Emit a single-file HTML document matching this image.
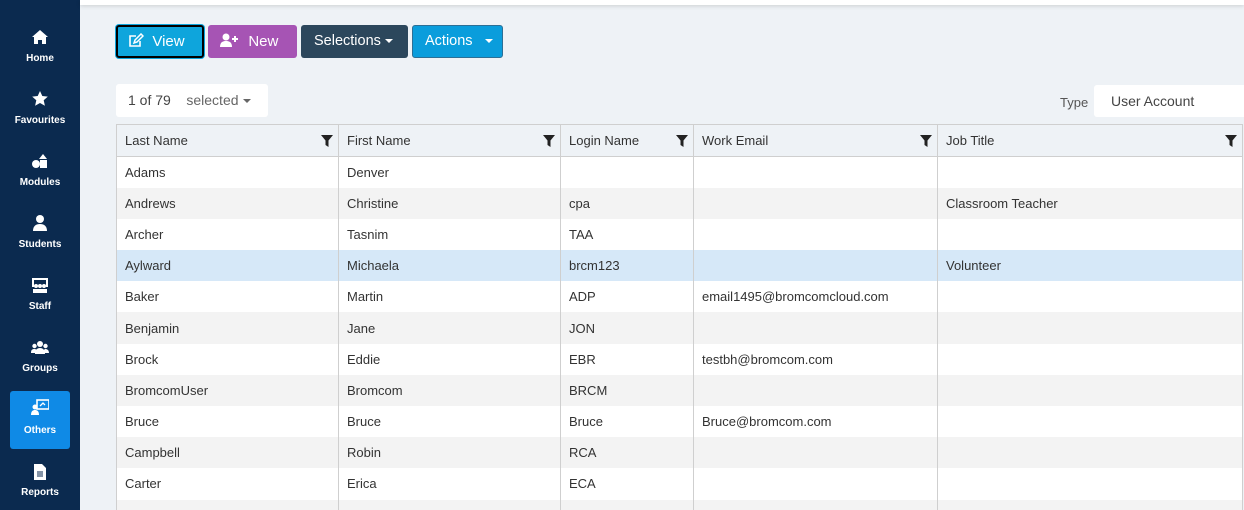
<!DOCTYPE html>
<html style="overflow:hidden;height:510px"><head><meta charset="utf-8"><style>
*{box-sizing:border-box;margin:0;padding:0}
body{width:1244px;height:510px;overflow:hidden;background:#eef2f6;font-family:"Liberation Sans",Arial,sans-serif;position:relative}
.side{position:absolute;left:0;top:0;width:80px;height:510px;background:#0b2a4f}
.nav{position:absolute;left:10px;width:60px;height:58px;color:#fff;font-size:10px;font-weight:bold;text-align:center}
.nav svg{position:absolute;left:21px;top:4px}
.nav span{position:absolute;left:0;right:0;top:28px}
.nav.act{background:#0f8ae6;border-radius:3px}
.top{position:absolute;left:80px;top:0;right:0;height:5px;background:#fff;box-shadow:0 1px 4px rgba(0,0,0,.15)}
.btn{position:absolute;top:25px;height:33px;color:#fff;font-size:15px;border-radius:3px;line-height:33px;white-space:nowrap}
.cnt{position:absolute;left:116px;top:84px;width:152px;height:33px;background:#fff;border-radius:3px;font-size:14px;color:#444;line-height:33px;padding-left:12px}
.caret{display:inline-block;width:0;height:0;border-left:4px solid transparent;border-right:4px solid transparent;border-top:4px solid currentColor;vertical-align:middle;margin-left:4px}
.wrap{position:absolute;left:116px;top:124px;height:386px;overflow:hidden}
table{border-collapse:collapse;font-size:13px;color:#333;table-layout:fixed}
th{height:32px;background:#eef2f6;font-weight:normal;text-align:left;padding-left:8px;border:1px solid #cfcfcf;position:relative;color:#333}
td{height:31.2px;padding-left:8px;border-left:1px solid #cfcfcf;border-right:1px solid #cfcfcf;white-space:nowrap}
tr:nth-child(odd) td{background:#f3f3f3}
tr:nth-child(even) td{background:#fff}
tr.sel td{background:#d6e8f8}
.f{position:absolute;right:5px;top:10px}
</style></head><body>
<div class="side">
 <div class="nav" style="top:25px"><svg width="18" height="16" viewBox="0 0 18 16"><path d="M9 1L1 8h2v7h4v-4h4v4h4V8h2z" fill="#fff"/></svg><span>Home</span></div>
 <div class="nav" style="top:87px"><svg width="18" height="16" viewBox="0 0 18 16"><path d="M9 0l2.3 5 5.5.6-4.1 3.7 1.2 5.4L9 12l-4.9 2.7 1.2-5.4L1.2 5.6 6.7 5z" fill="#fff"/></svg><span>Favourites</span></div>
 <div class="nav" style="top:149px"><svg width="18" height="16" viewBox="0 0 18 16"><circle cx="5" cy="11" r="4" fill="#fff"/><path d="M12 1l4 5h-8z" fill="#fff"/><rect x="9" y="7" width="7" height="8" fill="#fff"/></svg><span>Modules</span></div>
 <div class="nav" style="top:211px"><svg width="18" height="16" viewBox="0 0 18 16"><circle cx="9" cy="4" r="4" fill="#fff"/><path d="M2 16c0-5 3-7 7-7s7 2 7 7z" fill="#fff"/></svg><span>Students</span></div>
 <div class="nav" style="top:273px"><svg width="18" height="16" viewBox="0 0 18 16"><rect x="1" y="1" width="16" height="2" fill="#fff"/><rect x="1" y="1" width="2" height="9" fill="#fff"/><rect x="15" y="1" width="2" height="9" fill="#fff"/><circle cx="5" cy="9" r="2" fill="#fff"/><circle cx="9" cy="9" r="2" fill="#fff"/><circle cx="13" cy="9" r="2" fill="#fff"/><rect x="2" y="12" width="14" height="4" fill="#fff"/></svg><span>Staff</span></div>
 <div class="nav" style="top:335px"><svg width="18" height="16" viewBox="0 0 18 16"><circle cx="9" cy="5" r="3" fill="#fff"/><circle cx="3.5" cy="7" r="2.2" fill="#fff"/><circle cx="14.5" cy="7" r="2.2" fill="#fff"/><path d="M4 15c0-4 2-6 5-6s5 2 5 6zM0 14c0-3 1-4 3.5-4S6 12 6 14zM12 14c0-2 1-4 2.5-4S18 11 18 14z" fill="#fff"/></svg><span>Groups</span></div>
 <div class="nav act" style="top:391px"><svg width="18" height="16" viewBox="0 0 18 16" style="top:8px"><rect x="6" y="1" width="12" height="9" fill="none" stroke="#fff" stroke-width="1.6"/><path d="M9 7l3-3 2 2" stroke="#fff" fill="none" stroke-width="1.3"/><circle cx="4" cy="8" r="2.5" fill="#fff"/><path d="M0 16c0-4 2-5 4-5s4 1 4 5z" fill="#fff"/></svg><span style="top:34px">Others</span></div>
 <div class="nav" style="top:459px"><svg width="18" height="18" viewBox="0 0 18 18"><path d="M3 1h8l4 4v12H3z" fill="#fff"/><path d="M6 9h6M6 11h6M6 13h6" stroke="#0b2a4f"/></svg><span>Reports</span></div>
</div>
<div class="top"></div>
<div class="btn" style="left:116px;width:88px;background:#0ea5dc;border:2px solid #000;box-shadow:0 0 0 1px #0ea5dc;line-height:29px;padding-left:10px"><svg width="16" height="15" viewBox="0 0 16 15" style="vertical-align:-2px"><path d="M12 8v5H2V3h6" fill="none" stroke="#fff" stroke-width="1.6"/><path d="M6 10l1-3 6-6 2 2-6 6z" fill="none" stroke="#fff" stroke-width="1.5"/></svg>&nbsp; View</div>
<div class="btn" style="left:208px;width:89px;background:#a654b4;padding-left:12px"><svg width="20" height="14" viewBox="0 0 20 14" style="vertical-align:-1px"><circle cx="6" cy="4" r="3.5" fill="#fff"/><path d="M0 14c0-5 3-6 6-6s6 1 6 6z" fill="#fff"/><path d="M15 3v6M12 6h6" stroke="#fff" stroke-width="2"/></svg>&nbsp; New</div>
<div class="btn" style="left:301px;width:107px;background:#2c475c;padding-left:13px;font-size:14.5px">Selections<span class="caret"></span></div>
<div class="btn" style="left:412px;width:91px;background:#0a9ddc;padding-left:12px;border:1px solid #2c6f95;line-height:31px;font-size:14.5px">Actions &nbsp;<span class="caret"></span></div>
<div class="cnt">1 of 79 &nbsp;&nbsp; <span style="color:#666">selected</span><span class="caret" style="color:#666"></span></div>
<div style="position:absolute;left:1060px;top:95px;font-size:13px;color:#555">Type</div>
<div style="position:absolute;left:1094px;top:85px;width:160px;height:32px;background:#fff;border-radius:3px;font-size:14px;color:#444;line-height:32px;padding-left:17px">User Account</div>
<div class="wrap">
<table>
<colgroup><col style="width:222px"><col style="width:222px"><col style="width:133px"><col style="width:244px"><col style="width:305px"></colgroup>
<tr><th>Last Name<svg class="f" width="12" height="12" viewBox="0 0 12 12"><path d="M0 0h12L7.5 5.5V12L4.5 10V5.5z" fill="#222"/></svg></th><th>First Name<svg class="f" width="12" height="12" viewBox="0 0 12 12"><path d="M0 0h12L7.5 5.5V12L4.5 10V5.5z" fill="#222"/></svg></th><th>Login Name<svg class="f" width="12" height="12" viewBox="0 0 12 12"><path d="M0 0h12L7.5 5.5V12L4.5 10V5.5z" fill="#222"/></svg></th><th>Work Email<svg class="f" width="12" height="12" viewBox="0 0 12 12"><path d="M0 0h12L7.5 5.5V12L4.5 10V5.5z" fill="#222"/></svg></th><th>Job Title<svg class="f" width="12" height="12" viewBox="0 0 12 12"><path d="M0 0h12L7.5 5.5V12L4.5 10V5.5z" fill="#222"/></svg></th></tr>
<tr><td>Adams</td><td>Denver</td><td></td><td></td><td></td></tr>
<tr><td>Andrews</td><td>Christine</td><td>cpa</td><td></td><td>Classroom Teacher</td></tr>
<tr><td>Archer</td><td>Tasnim</td><td>TAA</td><td></td><td></td></tr>
<tr class="sel"><td>Aylward</td><td>Michaela</td><td>brcm123</td><td></td><td>Volunteer</td></tr>
<tr><td>Baker</td><td>Martin</td><td>ADP</td><td>email1495@bromcomcloud.com</td><td></td></tr>
<tr><td>Benjamin</td><td>Jane</td><td>JON</td><td></td><td></td></tr>
<tr><td>Brock</td><td>Eddie</td><td>EBR</td><td>testbh@bromcom.com</td><td></td></tr>
<tr><td>BromcomUser</td><td>Bromcom</td><td>BRCM</td><td></td><td></td></tr>
<tr><td>Bruce</td><td>Bruce</td><td>Bruce</td><td>Bruce@bromcom.com</td><td></td></tr>
<tr><td>Campbell</td><td>Robin</td><td>RCA</td><td></td><td></td></tr>
<tr><td>Carter</td><td>Erica</td><td>ECA</td><td></td><td></td></tr>
<tr><td>Cooper</td><td>Lisa</td><td>LCO</td><td></td><td></td></tr>
</table>
</div>
</body></html>
